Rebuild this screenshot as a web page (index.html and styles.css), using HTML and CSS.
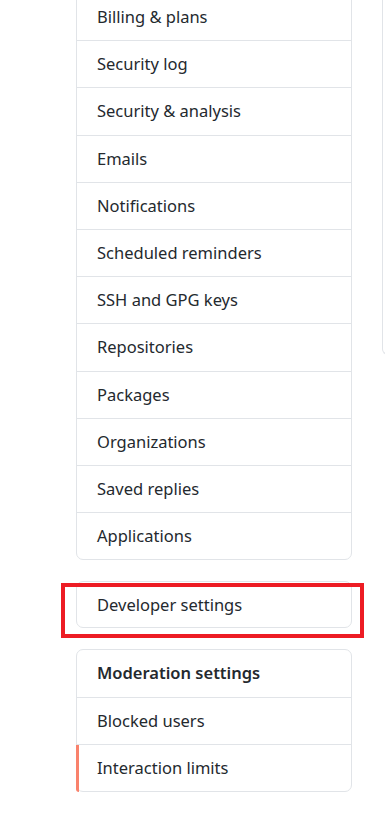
FILE: index.html
```html
<!DOCTYPE html>
<html>
<head>
<meta charset="utf-8">
<link rel="stylesheet" href="styles.css">
</head>
<body>
<div class="layout">
  <nav class="sidebar">
    <div class="menu menu-first">
      <a class="menu-item">Billing &amp; plans</a>
      <a class="menu-item">Security log</a>
      <a class="menu-item">Security &amp; analysis</a>
      <a class="menu-item">Emails</a>
      <a class="menu-item">Notifications</a>
      <a class="menu-item">Scheduled reminders</a>
      <a class="menu-item">SSH and GPG keys</a>
      <a class="menu-item">Repositories</a>
      <a class="menu-item">Packages</a>
      <a class="menu-item">Organizations</a>
      <a class="menu-item">Saved replies</a>
      <a class="menu-item">Applications</a>
    </div>
    <div class="menu menu-dev">
      <a class="menu-item">Developer settings</a>
      <div class="highlight"></div>
    </div>
    <div class="menu menu-mod">
      <div class="menu-heading">Moderation settings</div>
      <a class="menu-item">Blocked users</a>
      <a class="menu-item selected">Interaction limits</a>
    </div>
  </nav>
  <main class="content">
    <div class="panel"></div>
  </main>
</div>
</body>
</html>
```

FILE: styles.css
```css
html, body {
  margin: 0;
  padding: 0;
  background: #ffffff;
  overflow: hidden;
}
body {
  font-family: "Noto Sans", "Open Sans", sans-serif;
  color: #24292e;
  width: 385px;
  height: 819px;
}
.layout {
  display: grid;
  grid-template-columns: 276px 1fr;
  column-gap: 30px;
  padding-left: 76px;
  margin-top: -7px;
}
.sidebar {
  display: flex;
  flex-direction: column;
  gap: 21px;
}
.menu {
  position: relative;
  border: 1px solid #e1e4e8;
  border-radius: 7px;
  background: #fff;
}
.menu-first {
  border-top-left-radius: 0;
  border-top-right-radius: 0;
}
.menu-item, .menu-heading {
  display: block;
  padding: 10px 20px;
  font-size: 16.5px;
  line-height: 26px;
  height: 26px;
  border-top: 1px solid #e1e4e8;
  position: relative;
}
.menu-item:first-child, .menu-heading:first-child {
  border-top: 0;
}
.menu-first .menu-item {
  height: 26.2px;
}
.menu-mod .menu-item, .menu-mod .menu-heading {
  height: 26.4px;
}
.menu-heading {
  font-weight: 600;
}
.menu-dev .menu-item {
  height: 25px;
}
.selected::before {
  content: "";
  position: absolute;
  left: -1px;
  top: 0;
  bottom: -1px;
  width: 3px;
  background: #f9826c;
  border-bottom-left-radius: 7px;
}
.highlight {
  position: absolute;
  left: -16px;
  top: 1px;
  width: 295px;
  height: 47px;
  border: 4px solid #ed1c24;
  pointer-events: none;
}
.content {
  overflow: hidden;
}
.panel {
  width: 100px;
  height: 361px;
  border-left: 1px solid #e1e4e8;
  border-bottom: 1px solid #e1e4e8;
  border-bottom-left-radius: 6px;
}
```
